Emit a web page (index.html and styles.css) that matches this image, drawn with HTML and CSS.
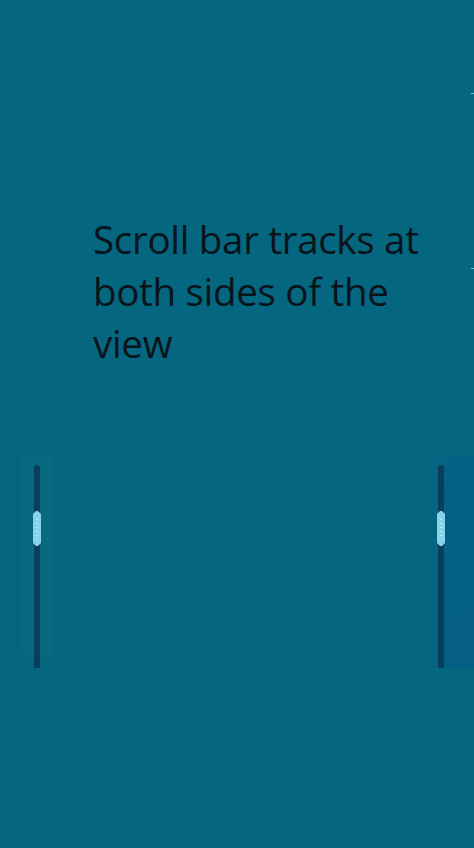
FILE: index.html
```html
<!DOCTYPE html>
<html>
<head>
<meta charset="utf-8">
<link rel="stylesheet" href="styles.css">
</head>
<body>
<div class="page">
  <div class="top">
    <span class="edge-mark mark-1"></span>
    <span class="edge-mark mark-2"></span>
    <p class="caption">Scroll bar tracks at both sides of the view</p>
  </div>
  <div class="tracks">
    <div class="side side-left">
      <div class="track"><div class="thumb"><span class="dots"></span></div></div>
    </div>
    <div class="side side-right">
      <div class="track"><div class="thumb"><span class="dots"></span></div></div>
      <div class="tint"></div>
    </div>
  </div>
</div>
</body>
</html>
```
FILE: styles.css
```css
html, body {
  margin: 0;
  padding: 0;
}
body {
  background: #05667f;
  font-family: "Open Sans", "Noto Sans", sans-serif;
}
.page {
  width: 474px;
  height: 848px;
  overflow: hidden;
}
.top {
  position: relative;
  height: 455px;
  padding: 0 40px 0 93px;
  box-sizing: border-box;
}
.caption {
  margin: 0;
  padding-top: 213px;
  font-size: 38.5px;
  line-height: 52px;
  color: #08141a;
  letter-spacing: -0.3px;
}
.edge-mark {
  position: absolute;
  right: 0;
  width: 3px;
  height: 1px;
  background: #6fc3dc;
}
.mark-1 { top: 93px; }
.mark-2 { top: 268px; }
.tracks {
  display: flex;
  justify-content: space-between;
  height: 213px;
}
.side {
  display: flex;
  padding-top: 10px;
  box-sizing: border-box;
}
.side-left {
  width: 30px;
  margin-left: 22px;
  height: 200px;
  justify-content: center;
  background: #086a80;
}
.side-right {
  width: 42px;
  padding-left: 6px;
  background: #056581;
}
.tint {
  flex: 1;
  margin-top: -10px;
  background: linear-gradient(#056185, #045e85);
}
.track {
  position: relative;
  width: 6px;
  height: 203px;
  background: #0b3d5c;
  border-radius: 3px 3px 0 0;
}
.thumb {
  position: absolute;
  left: -1px;
  top: 46px;
  width: 8px;
  height: 35px;
  background: #86d3ea;
  clip-path: polygon(0 3px, 3px 0, 5px 0, 8px 3px, 8px 32px, 5px 35px, 3px 35px, 0 32px);
  display: flex;
  justify-content: center;
}
.dots {
  margin-top: 8px;
  width: 2px;
  height: 19px;
  background: repeating-linear-gradient(#bfe9f5 0 1px, transparent 1px 4px);
}
```
